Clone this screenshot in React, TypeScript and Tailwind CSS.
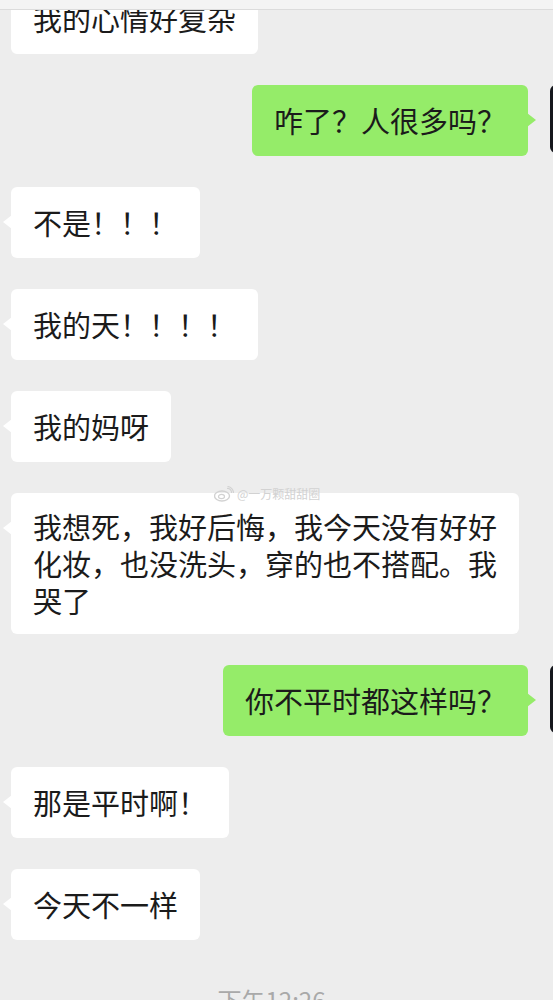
import React from "react";

type Msg = { side: "left" | "right"; lines: string[] };

const messages: Msg[] = [
  { side: "right", lines: ["咋了？人很多吗？"] },
  { side: "left", lines: ["不是！！！"] },
  { side: "left", lines: ["我的天！！！！"] },
  { side: "left", lines: ["我的妈呀"] },
  {
    side: "left",
    lines: ["我想死，我好后悔，我今天没有好好", "化妆，也没洗头，穿的也不搭配。我", "哭了"],
  },
  { side: "right", lines: ["你不平时都这样吗？"] },
  { side: "left", lines: ["那是平时啊！"] },
  { side: "left", lines: ["今天不一样"] },
];

function Bubble({ msg }: { msg: Msg }) {
  const green = msg.side === "right";
  const multi = msg.lines.length > 1;
  return (
    <div
      className={
        "relative rounded-[6px] px-[22px] text-[29px] leading-[37px] text-[#1b1b1b] whitespace-nowrap " +
        (multi ? "py-[15px] " : "py-[17px] ") +
        (green ? "bg-[#95ec69]" : "bg-white")
      }
    >
      {msg.lines.map((l, i) => (
        <div key={i}>{l}</div>
      ))}
      {green ? (
        <span className="absolute right-[-8px] top-[28px] h-0 w-0 border-y-[7px] border-l-[9px] border-y-transparent border-l-[#95ec69]" />
      ) : (
        <span className="absolute left-[-8px] top-[28px] h-0 w-0 border-y-[7px] border-r-[9px] border-y-transparent border-r-white" />
      )}
    </div>
  );
}

export default function App() {
  return (
    <div
      className="relative h-[1000px] w-[553px] overflow-hidden bg-[#ededed]"
      style={{ fontFamily: '"Noto Sans CJK SC", "Noto Sans", sans-serif' }}
    >
      {/* top bar edge */}
      <div className="h-[10px] border-b border-[#dcdcdc] bg-[#f4f4f4]" />

      <div className="flex flex-col gap-[31px]">
        {/* first bubble, cut by the bar */}
        <div className="flex h-[44px] items-end overflow-hidden pl-[11px]">
          <div className="rounded-[6px] bg-white px-[22px] pb-[17px] text-[29px] leading-[37px] text-[#1b1b1b]">
            我的心情好复杂
          </div>
        </div>

        {messages.map((m, i) =>
          m.side === "right" ? (
            <div key={i} className="flex items-start justify-end gap-[22px]">
              <Bubble msg={m} />
              <div className="mr-[-65px] h-[68px] w-[68px] shrink-0 rounded-[6px] bg-[#15171c]" />
            </div>
          ) : (
            <div key={i} className="flex pl-[11px]">
              <Bubble msg={m} />
            </div>
          )
        )}

        <div className="mt-[14px] pr-[10px] text-center text-[24px] leading-[30px] text-[#a9a9a9]">
          下午12:26
        </div>
      </div>

      {/* watermark */}
      <div className="absolute left-[214px] top-[486px] flex items-center gap-[3px] text-[12px] leading-[16px] text-[#d2d2d2]">
        <svg width="20" height="16" viewBox="0 0 20 16">
          <ellipse cx="8" cy="10" rx="7.5" ry="5" fill="none" stroke="#d2d2d2" strokeWidth="1.4" />
          <ellipse cx="7.5" cy="10.5" rx="3" ry="2.2" fill="none" stroke="#d2d2d2" strokeWidth="1.2" />
          <path d="M13 2.5a4 4 0 0 1 4.5 4.5" fill="none" stroke="#d2d2d2" strokeWidth="1.2" />
          <path d="M13.5 0.5a6.5 6.5 0 0 1 6 6.5" fill="none" stroke="#d2d2d2" strokeWidth="1.2" />
        </svg>
        <span>@一万颗甜甜圈</span>
      </div>
    </div>
  );
}
